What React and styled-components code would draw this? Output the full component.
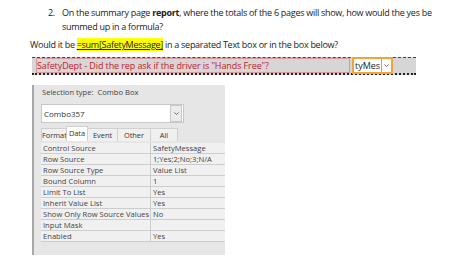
import React from 'react';
import styled, { createGlobalStyle } from 'styled-components';

const Global = createGlobalStyle`
  html, body { margin: 0; padding: 0; background: #fff; }
  body { width: 474px; height: 260px; overflow: hidden; font-family: 'Open Sans', 'Noto Sans', sans-serif; }
`;

// Document area
const Page = styled.div`
  padding: 6px 0 0 30px;
  color: #222;
  font-size: 9px;
  letter-spacing: -0.28px;
  line-height: 14px;
`;

const ListItem = styled.div`
  display: flex;
  padding-left: 18px;
`;

const Num = styled.span`
  width: 14px;
  flex: none;
`;

const Para = styled.div`
  margin-top: 4px;
`;

const Highlight = styled.span`
  background: #ffff00;
  text-decoration: underline;
`;

// The combo strip on the form
const FormStrip = styled.div`
  margin: 5px 0 0 2px;
  width: 384px;
  height: 15px;
  background: #d6d6d6;
  border-top: 1px dashed #444;
  border-bottom: 2px dotted #222;
  display: flex;
  align-items: center;
  gap: 2px;
`;

const LabelBox = styled.div`
  margin-left: 4px;
  width: 312px;
  height: 13px;
  border: 1px solid #d49a9a;
  color: #c4202f;
  font-size: 9px;
  line-height: 13px;
  white-space: nowrap;
  overflow: hidden;
  letter-spacing: -0.1px;
`;

const ComboMini = styled.div`
  display: flex;
  align-items: center;
  height: 13px;
  border: 2px solid #f2a43a;
  background: #fff;
  font-size: 9px;
  line-height: 13px;
  padding-left: 1px;
  letter-spacing: 0;
`;

const Chevron = ({ size = 7 }) => (
  <svg width={size} height={size} viewBox="0 0 10 10">
    <path d="M2 3.5 L5 6.5 L8 3.5" fill="none" stroke="#555" strokeWidth="1.2" />
  </svg>
);

const ChevBox = styled.span`
  display: flex;
  align-items: center;
  justify-content: center;
  width: 9px;
  height: 13px;
  border-left: 1px solid #aaa;
  margin-left: 1px;
`;

// Property sheet
const Sheet = styled.div`
  margin: 10px 0 0 2px;
  width: 193px;
  height: 170px;
  background: #e6e6e6;
  border-left: 2px solid #a8a8a8;
  padding: 2px 0 0 7px;
  box-sizing: border-box;
  font-size: 7.6px;
  letter-spacing: 0;
  color: #444;
`;

const SelType = styled.div`
  line-height: 10px;
  height: 17px;
  padding-left: 1px;
`;

const ComboField = styled.div`
  display: flex;
  width: 143px;
  height: 19px;
  background: #fff;
  border: 1px solid #c8c8c8;
  box-sizing: border-box;
  align-items: center;
  font-size: 8px;
  padding-left: 2px;
  color: #333;
`;

const ComboText = styled.span`
  flex: 1;
`;

const ComboBtn = styled.span`
  width: 10px;
  height: 15px;
  margin-right: 1px;
  border: 1px solid #c8c8c8;
  background: #ececec;
  display: flex;
  align-items: center;
  justify-content: center;
`;

const Tabs = styled.div`
  display: flex;
  margin-top: 3px;
  height: 15px;
  align-items: flex-end;
`;

const Tab = styled.div`
  width: ${p => p.$w}px;
  text-align: center;
  height: ${p => (p.$active ? 15 : 13)}px;
  line-height: 13px;
  background: ${p => (p.$active ? '#fff' : '#f0f0f0')};
  border: 1px solid #d0d0d0;
  border-bottom: none;
  margin-right: -1px;
  font-size: 7.4px;
  color: #333;
  box-sizing: border-box;
`;

const Table = styled.div`
  margin-top: 2px;
  background: #f0f0f0;
`;

const Row = styled.div`
  display: grid;
  grid-template-columns: 109px 1fr;
  height: 10px;
  border-bottom: 1px solid #cdcdcd;
  line-height: 10px;
`;

const Cell = styled.div`
  padding-left: 2px;
  white-space: nowrap;
  overflow: hidden;
  & + & { border-left: 1px solid #cdcdcd; }
`;

const rows = [
  ['Control Source', 'SafetyMessage'],
  ['Row Source', '1;Yes;2;No;3;N/A'],
  ['Row Source Type', 'Value List'],
  ['Bound Column', '1'],
  ['Limit To List', 'Yes'],
  ['Inherit Value List', 'Yes'],
  ['Show Only Row Source Values', 'No'],
  ['Input Mask', ''],
  ['Enabled', 'Yes'],
];

export default function App() {
  return (
    <>
      <Global />
      <Page>
        <ListItem>
          <Num>2.</Num>
          <div>
            On the summary page <b>report</b>, where the totals of the 6 pages will show, how would the yes be
            <br />
            summed up in a formula?
          </div>
        </ListItem>
        <Para>
          Would it be <Highlight>=sum[SafetyMessage]</Highlight> in a separated Text box or in the box below?
        </Para>
        <FormStrip>
          <LabelBox>SafetyDept - Did the rep ask if the driver is "Hands Free"?</LabelBox>
          <ComboMini>
            tyMes
            <ChevBox><Chevron /></ChevBox>
          </ComboMini>
        </FormStrip>
        <Sheet>
          <SelType>Selection type:&nbsp; Combo Box</SelType>
          <ComboField>
            <ComboText>Combo357</ComboText>
            <ComboBtn><Chevron /></ComboBtn>
          </ComboField>
          <Tabs>
            <Tab $w={26}>Format</Tab>
            <Tab $w={22} $active>Data</Tab>
            <Tab $w={31}>Event</Tab>
            <Tab $w={34}>Other</Tab>
            <Tab $w={28}>All</Tab>
          </Tabs>
          <Table>
            {rows.map(([k, v]) => (
              <Row key={k}>
                <Cell>{k}</Cell>
                <Cell>{v}</Cell>
              </Row>
            ))}
          </Table>
        </Sheet>
      </Page>
    </>
  );
}
